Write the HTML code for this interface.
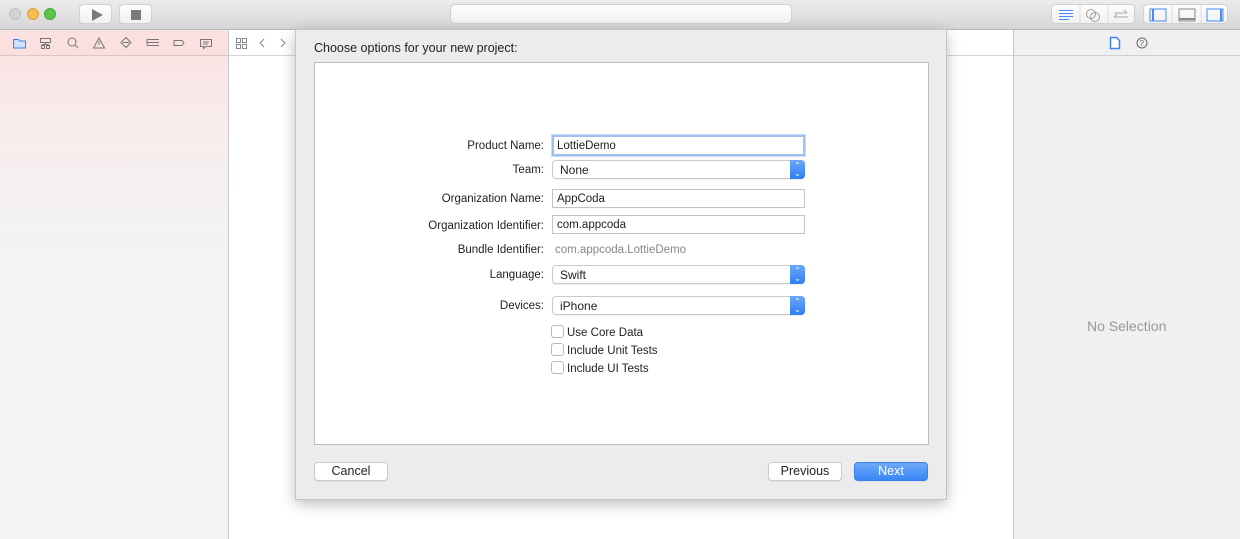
<!DOCTYPE html>
<html><head><meta charset="utf-8"><style>
*{box-sizing:border-box;margin:0;padding:0}
body{width:1240px;height:539px;overflow:hidden;position:relative;background:#fff;font-family:"Liberation Sans",sans-serif;font-size:12px;color:#222}
.abs{position:absolute}
#tb{left:0;top:0;width:1240px;height:30px;background:linear-gradient(#ececec,#d6d6d6);border-bottom:1px solid #b8b8b8}
.dot{top:8px;width:12px;height:12px;border-radius:50%}
.tbtn{background:linear-gradient(#fdfdfd,#f1f1f1);border:1px solid #d0d0d0;border-radius:4px}
#side{left:0;top:30px;width:228px;height:509px;background:linear-gradient(#fbe0e0 0,#f8ecec 90px,#f3f3f3 220px,#f3f3f3)}
#sidebar2{left:0;top:30px;width:228px;height:26px;background:#fbe0e0;border-bottom:1px solid #d8c8c8}
#mid{left:228px;top:30px;width:786px;height:509px;background:#fff;border-left:1px solid #c8c8c8}
#midbar{left:229px;top:30px;width:784px;height:26px;border-bottom:1px solid #d6d6d6;background:#fff}
#right{left:1013px;top:30px;width:227px;height:509px;background:#f0f0f0;border-left:1px solid #c8c8c8}
#rbar{left:1013px;top:30px;width:227px;height:26px;border-bottom:1px solid #cfcfcf}
#dlg{left:296px;top:30px;width:650px;height:469px;background:#ececec;box-shadow:0 0 0 1px #c4c4c4,0 4px 14px rgba(0,0,0,.3)}
#box{left:18px;top:32px;width:615px;height:383px;background:#fff;border:1px solid #bdbdbd}
.lbl{width:248px;text-align:right;font-size:11.5px;color:#222}
.inp{left:256px;width:253px;height:19px;background:#fff;border:1px solid #c4c4c4;padding:3px 4px 0;font-size:11.5px}
.pop{left:256px;width:253px;height:19px;background:#fff;border:1px solid #cacaca;border-radius:4px;padding:2px 4px 0 7px;font-size:12px;box-shadow:0 1px 1px rgba(0,0,0,.08)}
.pop .cap{position:absolute;right:-1px;top:-1px;width:15px;height:19px;background:linear-gradient(#6aa7fb,#2f7ff5);border-radius:0 4px 4px 0;color:#fff;font-size:8px;line-height:8px;text-align:center;padding-top:2px}
.cb{left:255px;width:13px;height:13px;border:1px solid #b8b8b8;border-radius:3px;background:#fff}
.cbl{left:271px;font-size:11.5px}
.btn{height:19px;border:1px solid #cbcbcb;border-radius:4px;background:#fff;text-align:center;font-size:12.5px;line-height:17px;box-shadow:0 1px 1px rgba(0,0,0,.06)}
</style></head><body>
<div id="tb" class="abs">
 <div class="abs dot" style="left:9px;background:#d3d3d3;border:1px solid #c0c0c0"></div>
 <div class="abs dot" style="left:27px;background:#f5bf4f;border:1px solid #dea236"></div>
 <div class="abs dot" style="left:44px;background:#5bc548;border:1px solid #45a93a"></div>
 <div class="abs tbtn" style="left:79px;top:4px;width:33px;height:20px"><svg width="33" height="20"><path d="M12 4L23 10L12 16Z" fill="#7a7a7a"/></svg></div>
 <div class="abs tbtn" style="left:119px;top:4px;width:33px;height:20px"><svg width="33" height="20"><rect x="11" y="5" width="10" height="10" fill="#7a7a7a"/></svg></div>
 <div class="abs tbtn" style="left:450px;top:4px;width:342px;height:20px;border-radius:5px"></div>
 <div class="abs tbtn" style="left:1051px;top:4px;width:84px;height:20px">
  <svg width="84" height="20"><g stroke="#4a8af4" stroke-width="1"><path d="M7 5.5h14M7 8.5h14M7 11.5h14M7 14.5h10"/></g><path d="M28 0v20M56 0v20" stroke="#ddd"/><circle cx="39" cy="9" r="4.5" fill="none" stroke="#999"/><circle cx="43" cy="12" r="4.5" fill="none" stroke="#999"/><path d="M62 12h14M62 12l3-3M75 8h-13M75 8l-3-3" stroke="#aaa" fill="none"/></svg></div>
 <div class="abs tbtn" style="left:1143px;top:4px;width:85px;height:20px">
  <svg width="85" height="20"><rect x="6" y="4" width="16" height="12" fill="none" stroke="#4a8af4"/><path d="M9 4v12" stroke="#4a8af4" stroke-width="2"/><path d="M28 0v20M57 0v20" stroke="#ddd"/><rect x="35" y="4" width="16" height="12" fill="none" stroke="#888"/><path d="M35 14h16" stroke="#888" stroke-width="2"/><rect x="63" y="4" width="16" height="12" fill="none" stroke="#4a8af4"/><path d="M77 4v12" stroke="#4a8af4" stroke-width="2"/></svg></div>
</div>
<div id="side" class="abs"></div>
<div id="sidebar2" class="abs">
 <svg width="228" height="26" fill="none" stroke="#777" stroke-width="1">
  <path d="M13.5 9.5h5l1 1.5h6v7h-12z" stroke="#3d84f3" fill="#cfe0fb"/>
  <path d="M40.5 8.5h10v4h-10zM45.5 12.5v2M42 14.5h7M41.5 15.5h3v3h-3zM46.5 15.5h3v3h-3z"/>
  <circle cx="72" cy="12" r="4"/><path d="M75 15l3 3"/>
  <path d="M99 8l5.5 10h-11z M99 11v4"/>
  <path d="M126 7.5l5 5-5 5-5-5zM123 12.5h6"/>
  <path d="M147 9.5h12M147 12.5h12M147 15.5h12M147 9.5v6"/>
  <path d="M174 10.5h8l2 2.5-2 2.5h-8z"/>
  <path d="M200.5 9.5h11v7h-6l-2 2v-2h-3z M203 12h6M203 14h5"/>
 </svg>
</div>
<div id="mid" class="abs"></div>
<div id="midbar" class="abs"><svg width="70" height="26" fill="none" stroke="#888"><rect x="7.5" y="8.5" width="4" height="4"/><rect x="13.5" y="8.5" width="4" height="4"/><rect x="7.5" y="14.5" width="4" height="4"/><rect x="13.5" y="14.5" width="4" height="4"/><path d="M35 9l-4 4 4 4M52 9l4 4-4 4"/></svg></div>
<div id="right" class="abs"></div>
<div id="rbar" class="abs"><svg width="227" height="26"><path d="M97.5 7.5h6l3 3v8h-9z" fill="#fff" stroke="#3d84f3" stroke-width="1.5"/><circle cx="129" cy="13" r="5" fill="none" stroke="#666"/><text x="126.5" y="16" font-size="8" fill="#666" font-family="Liberation Sans">?</text></svg></div>
<div class="abs" style="left:1087px;top:318px;font-size:14px;color:#999">No Selection</div>

<div id="dlg" class="abs">
 <div class="abs" style="left:18px;top:11px;font-size:12.5px;color:#222">Choose options for your new project:</div>
 <div id="box" class="abs"></div>
 <div class="abs lbl" style="top:110px">Product Name:</div>
 <div class="abs inp" style="top:105px;height:21px;border:2px solid #9fbfec;box-shadow:0 0 0 1px #c9dbf6;padding:3px 3px 0">LottieDemo</div>
 <div class="abs lbl" style="top:134px">Team:</div>
 <div class="abs pop" style="top:130px">None<div class="cap">⌃<br>⌄</div></div>
 <div class="abs lbl" style="top:163px">Organization Name:</div>
 <div class="abs inp" style="top:159px">AppCoda</div>
 <div class="abs lbl" style="top:190px">Organization Identifier:</div>
 <div class="abs inp" style="top:185px">com.appcoda</div>
 <div class="abs lbl" style="top:214px">Bundle Identifier:</div>
 <div class="abs" style="left:259px;top:214px;font-size:11.5px;color:#888">com.appcoda.LottieDemo</div>
 <div class="abs lbl" style="top:239px">Language:</div>
 <div class="abs pop" style="top:235px">Swift<div class="cap">⌃<br>⌄</div></div>
 <div class="abs lbl" style="top:270px">Devices:</div>
 <div class="abs pop" style="top:266px">iPhone<div class="cap">⌃<br>⌄</div></div>
 <div class="abs cb" style="top:295px"></div><div class="abs cbl" style="top:297px">Use Core Data</div>
 <div class="abs cb" style="top:313px"></div><div class="abs cbl" style="top:315px">Include Unit Tests</div>
 <div class="abs cb" style="top:331px"></div><div class="abs cbl" style="top:333px">Include UI Tests</div>
 <div class="abs btn" style="left:18px;top:432px;width:74px">Cancel</div>
 <div class="abs btn" style="left:472px;top:432px;width:74px">Previous</div>
 <div class="abs btn" style="left:558px;top:432px;width:74px;background:linear-gradient(#6fa9fb,#3a86f6);border-color:#3a80ee;color:#fff">Next</div>
</div>
</body></html>
